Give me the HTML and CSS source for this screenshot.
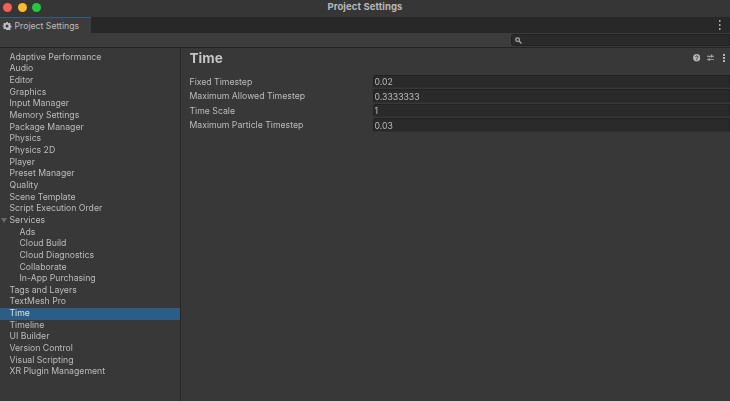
FILE: index.html
```html
<!DOCTYPE html>
<html lang="en">
<head>
<meta charset="utf-8">
<title>Project Settings</title>
<link rel="stylesheet" href="styles.css">
</head>
<body>
<div class="window">
  <header class="titlebar">
    <div class="lights">
      <span class="light red"></span>
      <span class="light yellow"></span>
      <span class="light green"></span>
    </div>
    <div class="title">Project Settings</div>
  </header>
  <div class="tabbar">
    <div class="tab">
      <svg class="gear" viewBox="-1 -1 12 12" width="10" height="10">
        <path fill="#c0c0c0" fill-rule="evenodd" d="M4 .2h2l.25 1.300.8.33 1.100-.72 1.410 1.410-.72 1.100.33.8 1.300.25v2l-1.300.25-.33.8.72 1.100-1.410 1.410-1.100-.72-.8.33L6 9.800H4l-.25-1.300-.8-.33-1.100.72L.44 7.480l.72-1.100-.33-.8L-.47 5.330v-.66l1.300-.25.33-.8-.72-1.100L1.850 1.110l1.100.72.8-.33zM5 3.200a1.800 1.800 0 1 0 0 3.600 1.800 1.800 0 0 0 0-3.600z"/>
      </svg>
      <span>Project Settings</span>
    </div>
    <svg class="dots" viewBox="0 0 2 10" width="2" height="10"><path fill="#a8a8a8" d="M0 0h1.500v2H0zM0 4h1.500v2H0zM0 8h1.500v2H0z"/></svg>
  </div>
  <div class="toolbar">
    <div class="search">
      <svg viewBox="0 0 8 8" width="7" height="7"><circle cx="3" cy="3" r="2.1" fill="none" stroke="#a8a8a8" stroke-width="1.5"/><path d="M4.600 4.600 7.400 7.400" stroke="#a8a8a8" stroke-width="1.400"/></svg>
    </div>
  </div>
  <div class="main">
    <nav class="sidebar">
      <div class="row">Adaptive Performance</div>
      <div class="row">Audio</div>
      <div class="row">Editor</div>
      <div class="row">Graphics</div>
      <div class="row">Input Manager</div>
      <div class="row">Memory Settings</div>
      <div class="row">Package Manager</div>
      <div class="row">Physics</div>
      <div class="row">Physics 2D</div>
      <div class="row">Player</div>
      <div class="row">Preset Manager</div>
      <div class="row">Quality</div>
      <div class="row">Scene Template</div>
      <div class="row">Script Execution Order</div>
      <div class="row parent"><span class="caret"></span>Services</div>
      <div class="row child">Ads</div>
      <div class="row child">Cloud Build</div>
      <div class="row child">Cloud Diagnostics</div>
      <div class="row child">Collaborate</div>
      <div class="row child">In-App Purchasing</div>
      <div class="row">Tags and Layers</div>
      <div class="row">TextMesh Pro</div>
      <div class="row selected">Time</div>
      <div class="row">Timeline</div>
      <div class="row">UI Builder</div>
      <div class="row">Version Control</div>
      <div class="row">Visual Scripting</div>
      <div class="row">XR Plugin Management</div>
    </nav>
    <section class="content">
      <div class="heading">
        <h1>Time</h1>
        <div class="icons">
          <svg viewBox="0 0 8 8" width="7.500" height="7.500"><circle cx="4" cy="4" r="3.900" fill="#b4b4b4"/><path d="M2.800 3.100a1.200 1.100 0 1 1 1.700 1L4 4.600v.5" fill="none" stroke="#383838" stroke-width="1"/><path d="M3.500 5.700h1v1h-1z" fill="#383838"/></svg>
          <svg viewBox="0 0 8 8" width="7.500" height="7.500"><path fill="#b4b4b4" d="M0 1.800h4.500V.5h1v1.300H8v1H5.500v1.300h-1V2.800H0zM0 5.200h1.800V3.900h1v1.300H8v1H2.800v1.300h-1V6.200H0z"/></svg>
          <svg class="more" viewBox="0 0 2 8" width="2" height="8"><path fill="#b4b4b4" d="M0 0h2v2H0zM0 3h2v2H0zM0 6h2v2H0z"/></svg>
        </div>
      </div>
      <div class="fields">
        <div class="field"><label>Fixed Timestep</label><div class="input">0.02</div></div>
        <div class="field"><label>Maximum Allowed Timestep</label><div class="input">0.3333333</div></div>
        <div class="field"><label>Time Scale</label><div class="input">1</div></div>
        <div class="field"><label>Maximum Particle Timestep</label><div class="input">0.03</div></div>
      </div>
    </section>
  </div>
</div>
</body>
</html>
```
FILE: styles.css
```css
* { box-sizing: border-box; }
html, body { margin: 0; padding: 0; }
body {
  width: 730px;
  height: 401px;
  overflow: hidden;
  background: #383838;
  font-family: Inter, "Liberation Sans", sans-serif;
  font-size: 8.7px;
  color: #bcbcbc;
}
.window { display: flex; flex-direction: column; height: 401px; filter: blur(0.3px); }

.titlebar {
  height: 17px;
  flex: none;
  position: relative;
  display: flex;
  align-items: center;
  justify-content: center;
  background: #363636;
}
.lights { position: absolute; left: 3px; top: 3px; display: flex; gap: 5.5px; }
.light { width: 9px; height: 9px; border-radius: 50%; }
.red { background: #fc5c57; }
.yellow { background: #fdbb2e; }
.green { background: #27c83f; }
.title { font-size: 9.5px; font-weight: 700; color: #b8b8b8; letter-spacing: 0.1px; margin-top: -4px; }

.tabbar {
  height: 16px;
  flex: none;
  display: flex;
  align-items: center;
  justify-content: space-between;
  padding-right: 9px;
  background: #282828;
}
.tab {
  width: 91px;
  height: 16px;
  display: flex;
  align-items: center;
  gap: 3px;
  padding-left: 1.500px;
  background: #3c3c3c;
  border-top: 1px solid #2c5d87;
}
.gear { flex: none; }

.toolbar {
  height: 15px;
  flex: none;
  display: flex;
  justify-content: flex-end;
  align-items: center;
  background: #3c3c3c;
  border-bottom: 1px solid #232323;
}
.search {
  width: 219px;
  height: 12px;
  display: flex;
  align-items: center;
  padding-left: 3px;
  background: #2a2a2a;
  border: 1px solid #212121;
  border-radius: 3px 0 0 3px;
}

.main { flex: 1; display: flex; min-height: 0; }
.sidebar {
  width: 181px;
  flex: none;
  padding-top: 3.7px;
  border-right: 1px solid #272727;
}
.row {
  height: 11.667px;
  line-height: 11.667px;
  padding-left: 9.5px;
  white-space: nowrap;
  position: relative;
}
.child { padding-left: 19.5px; }
.selected { background: #2c5d87; color: #e0e0e0; }
.caret {
  position: absolute;
  left: 1px;
  top: 3.5px;
  border-left: 3px solid transparent;
  border-right: 3px solid transparent;
  border-top: 5px solid #6a6a6a;
}

.content { flex: 1; min-width: 0; padding-left: 8.5px; }
.heading {
  height: 20px;
  display: flex;
  align-items: center;
  justify-content: space-between;
  padding-right: 5px;
}
h1 { margin: 0; font-size: 13.6px; font-weight: 700; color: #c4c4c4; line-height: 20px; }
.icons { display: flex; align-items: center; gap: 6.4px; }
.more { margin-left: 2.6px; }

.fields { margin-top: 6.5px; display: flex; flex-direction: column; gap: 1px; }
.field { height: 13.5px; display: flex; align-items: center; }
.field label { width: 183px; flex: none; padding-top: 1px; }
.input {
  flex: 1;
  height: 13.5px;
  line-height: 12.5px;
  padding-top: 0.5px;
  padding-left: 1px;
  background: #2a2a2a;
  border: 1px solid #212121;
  border-bottom-color: #303030;
  border-radius: 3px 0 0 3px;
}
```
